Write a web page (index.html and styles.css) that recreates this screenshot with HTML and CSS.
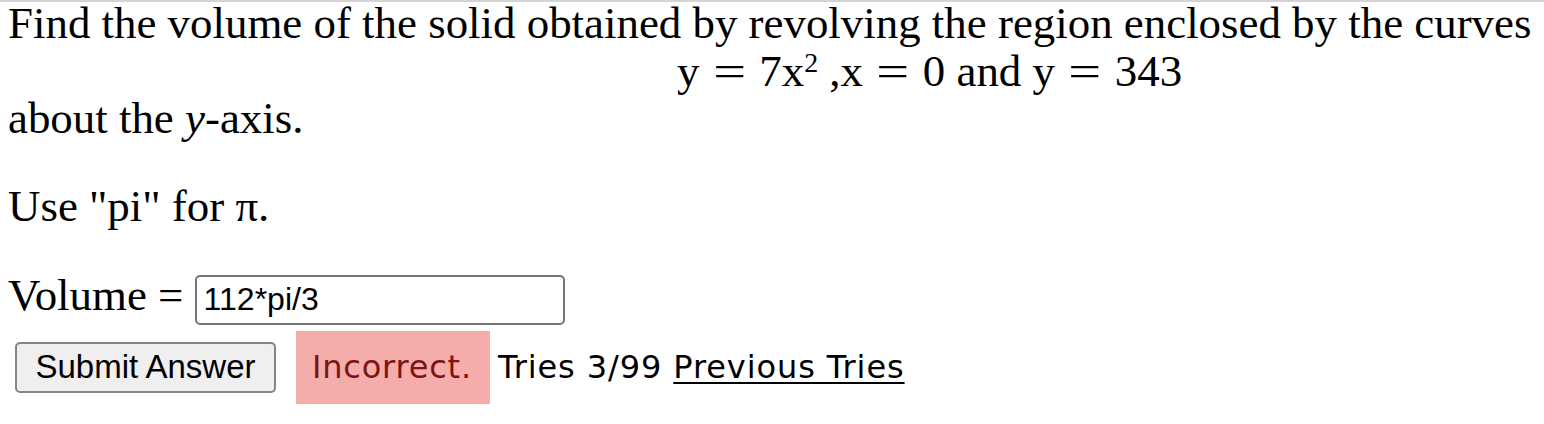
FILE: index.html
```html
<!DOCTYPE html>
<html lang="en">
<head>
<meta charset="utf-8">
<title>Problem</title>
<link rel="stylesheet" href="styles.css">
</head>
<body>
<div class="topline"></div>
<main class="problem">
  <p class="para first">Find the volume of the solid obtained by revolving the region enclosed by the curves
    <span class="equation">y <span class="op">=</span> 7x<sup class="sup">2</sup> ,x <span class="op">=</span> 0 and y <span class="op">=</span> 343</span>
    about the <i>y</i>-axis.</p>
  <p class="para second">Use "pi" for π.</p>
  <p class="para">Volume = <input class="answer" type="text" value="112*pi/3"></p>
  <div class="actions">
    <button class="submit" type="button">Submit Answer</button>
    <span class="verdict">Incorrect.</span>
    <span class="tries">Tries 3/99 <a class="prev" href="#">Previous Tries</a></span>
  </div>
</main>
</body>
</html>
```
FILE: styles.css
```css
html, body {
  margin: 0;
  padding: 0;
  background: #ffffff;
}
body {
  font-family: "Liberation Serif", "Times New Roman", serif;
  color: #000;
}
.topline {
  height: 2px;
  background: #d4d4d4;
}
.problem {
  padding-left: 8px;
}
.para {
  margin: 42px 0 0 0;
  font-size: 44.9px;
  line-height: 47.5px;
}
.para.first {
  margin-top: -2px;
}
.para.second {
  margin-top: 40px;
}
.equation {
  display: block;
  padding-left: 669px;
}
.op {
  display: inline-block;
  margin: 0 6px;
  transform: scaleX(1.3);
}
.sup {
  font-size: 28px;
  line-height: 0;
  vertical-align: 14px;
}
.answer {
  box-sizing: border-box;
  width: 370px;
  height: 50px;
  padding: 4px 7px;
  margin: 0;
  border: 2px solid #767676;
  border-radius: 5px;
  font-family: "Liberation Sans", Arial, sans-serif;
  font-size: 32px;
  color: #000;
  background: #fff;
  vertical-align: baseline;
}
.actions {
  display: flex;
  align-items: center;
  margin-top: 6px;
  font-family: "DejaVu Sans", Verdana, sans-serif;
  font-size: 32px;
}
.submit {
  box-sizing: border-box;
  height: 51px;
  width: 261px;
  margin-left: 7px;
  padding: 0;
  border: 2px solid #858585;
  border-radius: 5px;
  background: #efefef;
  font-family: "Liberation Sans", Arial, sans-serif;
  font-size: 33px;
  color: #000;
}
.verdict {
  margin-left: 20px;
  padding: 18px 18px 18px 16px;
  background: #f4adab;
  color: #7d1414;
  line-height: 37px;
  letter-spacing: 0.8px;
}
.tries {
  margin-left: 8px;
  color: #000;
  letter-spacing: 0.9px;
}
.prev {
  color: #000;
  text-decoration: underline;
  text-decoration-thickness: 2px;
  text-underline-offset: 4px;
}
```
